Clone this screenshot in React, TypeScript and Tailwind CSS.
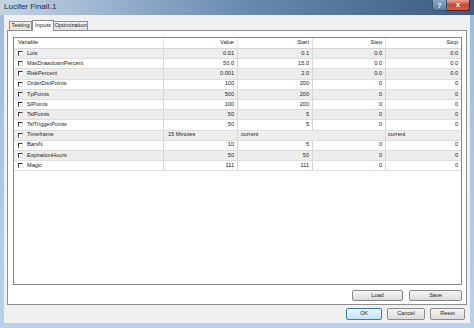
import React from "react";

type Row = {
  name: string;
  value: string;
  start: string;
  step: string;
  stop: string;
  text?: boolean;
};

const rows: Row[] = [
  { name: "Lots", value: "0.01", start: "0.1", step: "0.0", stop: "0.0" },
  { name: "MaxDrawdownPercent", value: "50.0", start: "15.0", step: "0.0", stop: "0.0" },
  { name: "RiskPercent", value: "0.001", start: "2.0", step: "0.0", stop: "0.0" },
  { name: "OrderDistPoints", value: "100", start: "200", step: "0", stop: "0" },
  { name: "TpPoints", value: "500", start: "200", step: "0", stop: "0" },
  { name: "SlPoints", value: "100", start: "200", step: "0", stop: "0" },
  { name: "TslPoints", value: "50", start: "5", step: "0", stop: "0" },
  { name: "TslTriggerPoints", value: "50", start: "5", step: "0", stop: "0" },
  { name: "Timeframe", value: "15 Minutes", start: "current", step: "", stop: "current", text: true },
  { name: "BarsN", value: "10", start: "5", step: "0", stop: "0" },
  { name: "ExpirationHours", value: "50", start: "50", step: "0", stop: "0" },
  { name: "Magic", value: "111", start: "111", step: "0", stop: "0" },
];

function CheckBox() {
  return (
    <span className="ml-[4px] mr-[4px] block h-[5px] w-[5px] shrink-0 border-l-[1.5px] border-t-[1.5px] border-r border-b border-l-[#3a3a3a] border-t-[#3a3a3a] border-r-[#e4e4e4] border-b-[#e4e4e4] bg-white" />
  );
}

function WinButton({ label, primary, className }: { label: string; primary?: boolean; className: string }) {
  return (
    <button
      type="button"
      className={
        "flex items-center justify-center rounded-[2px] border text-[5.6px] leading-none text-[#222] " +
        (primary
          ? "border-[#3d7bad] bg-gradient-to-b from-[#eaf6fd] to-[#bee6fd] "
          : "border-[#8a8a8a] bg-gradient-to-b from-[#f4f4f4] to-[#dcdcdc] ") +
        className
      }
    >
      {label}
    </button>
  );
}

export default function App() {
  return (
    <div
      className="flex h-[328px] w-[474px] flex-col overflow-hidden bg-gradient-to-b from-[#9fbbdc] to-[#b9d1ea] text-[#222]"
      style={{ fontFamily: '"Liberation Sans", Arial, sans-serif' }}
    >
      {/* title bar */}
      <div className="flex h-[15px] shrink-0 items-start bg-gradient-to-r from-[#c3d4e6] via-[#6a8cb2] to-[#3b5b82]">
        <span className="ml-[4px] mt-[3px] text-[8px] leading-none text-[#1e2a3a]">Lucifer FinalI.1</span>
        <div className="ml-auto mr-[4px] flex h-[11px]">
          <div className="flex w-[15px] items-center justify-center rounded-bl-[3px] border border-t-0 border-[#3a5470] bg-gradient-to-b from-[#8aa6c6] to-[#5c7da3] text-[7px] font-bold leading-none text-white">
            ?
          </div>
          <div className="flex w-[23px] items-center justify-center rounded-br-[3px] border border-l-0 border-t-0 border-[#5a1e16] bg-gradient-to-b from-[#e8a08c] via-[#c7452f] to-[#d8604a] text-[8px] font-bold leading-none text-white">
            x
          </div>
        </div>
      </div>

      <div className="flex min-h-0 flex-1 px-[4px] pb-[5px]">
        {/* dialog body */}
        <div className="flex flex-1 flex-col bg-[#f0f0f0] px-[3px] pt-[4px]">
          {/* tabs */}
          <div className="flex h-[11px] shrink-0 items-end pl-[2px]">
            <div className="flex h-[9px] w-[23px] items-center justify-center border border-b-0 border-[#8e8f8f] bg-gradient-to-b from-[#f2f2f2] to-[#e0e0e0] text-[5.8px] leading-none">
              Testing
            </div>
            <div className="relative z-10 -mb-px flex h-[11px] w-[22px] items-center justify-center border border-b-0 border-[#8e8f8f] bg-white text-[5.8px] leading-none">
              Inputs
            </div>
            <div className="flex h-[9px] w-[34px] items-center justify-center border border-b-0 border-l-0 border-[#8e8f8f] bg-gradient-to-b from-[#f2f2f2] to-[#e0e0e0] text-[5.8px] leading-none">
              Optimization
            </div>
          </div>

          {/* tab panel */}
          <div className="flex h-[275px] shrink-0 flex-col border border-[#8e8f8f] bg-white pl-[5px] pr-[4px] pt-[6px]">
            <div className="flex h-[248px] shrink-0 flex-col border border-[#828790] bg-white">
              <div className="flex h-[11px] shrink-0 border-b border-[#d5d5d5] text-[5.6px] leading-none">
                <div className="flex w-[150px] items-center border-r border-[#e3e3e3] pl-[4px]">Variable</div>
                <div className="flex w-[74px] items-center justify-end border-r border-[#e3e3e3] pr-[3px]">Value</div>
                <div className="flex w-[75px] items-center justify-end border-r border-[#e3e3e3] pr-[3px]">Start</div>
                <div className="flex w-[73px] items-center justify-end border-r border-[#e3e3e3] pr-[3px]">Step</div>
                <div className="flex flex-1 items-center justify-end pr-[3px]">Stop</div>
              </div>
              {rows.map((r, i) => (
                <div
                  key={r.name}
                  className={
                    "flex h-[10.2px] shrink-0 border-b border-[#dedede] text-[5.6px] leading-none " +
                    (i % 2 === 0 ? "bg-[#ededed]" : "bg-white")
                  }
                >
                  <div className="flex w-[150px] items-center border-r border-[#d6d6d6]">
                    <CheckBox />
                    <span>{r.name}</span>
                  </div>
                  {r.text ? (
                    <>
                      <div className="flex w-[74px] items-center border-r border-[#d6d6d6] pl-[4px]">{r.value}</div>
                      <div className="flex w-[148px] items-center border-r border-[#d6d6d6] pl-[3px]">{r.start}</div>
                      <div className="flex flex-1 items-center pl-[2px]">{r.stop}</div>
                    </>
                  ) : (
                    <>
                      <div className="flex w-[74px] items-center justify-end border-r border-[#d6d6d6] pr-[3px]">{r.value}</div>
                      <div className="flex w-[75px] items-center justify-end border-r border-[#d6d6d6] pr-[3px]">{r.start}</div>
                      <div className="flex w-[73px] items-center justify-end border-r border-[#d6d6d6] pr-[3px]">{r.step}</div>
                      <div className="flex flex-1 items-center justify-end pr-[3px]">{r.stop}</div>
                    </>
                  )}
                </div>
              ))}
            </div>
            <div className="mt-[5px] flex justify-end gap-[6px]">
              <WinButton label="Load" className="h-[11px] w-[51px]" />
              <WinButton label="Save" className="h-[11px] w-[53px]" />
            </div>
          </div>

          {/* dialog buttons */}
          <div className="mt-[3px] flex justify-end gap-[5px] pr-[2px]">
            <WinButton label="OK" primary className="h-[12px] w-[36px]" />
            <WinButton label="Cancel" className="h-[12px] w-[38px]" />
            <WinButton label="Reset" className="h-[12px] w-[35px]" />
          </div>
        </div>
      </div>
    </div>
  );
}
